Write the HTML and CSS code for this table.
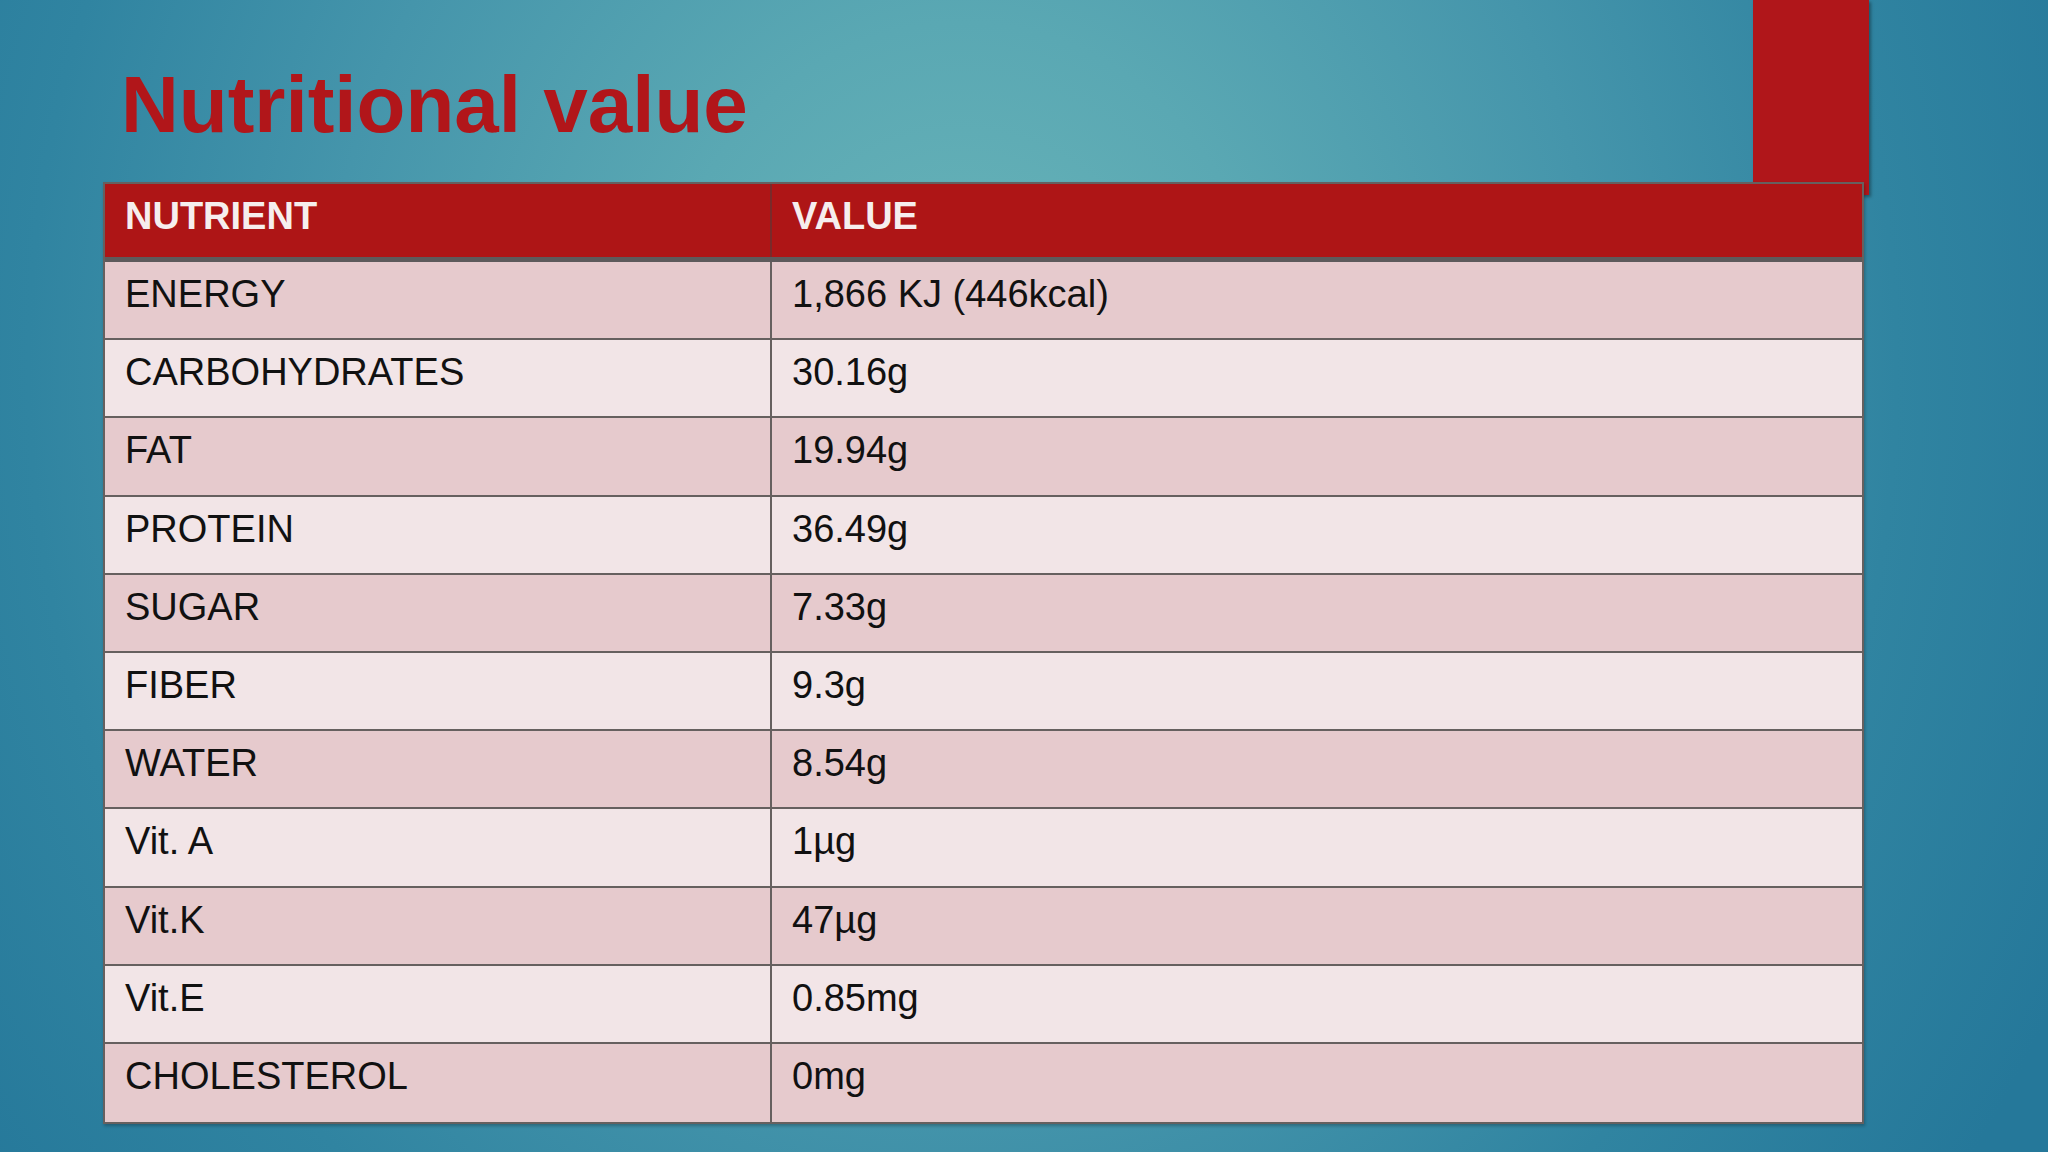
FILE: index.html
```html
<!DOCTYPE html>
<html lang="en">
<head>
<meta charset="utf-8">
<title>Nutritional value</title>
<link rel="stylesheet" href="styles.css">
</head>
<body>
<div class="slide">
  <div class="accent"></div>
  <h1 class="title">Nutritional value</h1>
  <div class="table">
    <div class="row head"><div class="cell">NUTRIENT</div><div class="cell">VALUE</div></div>
    <div class="row odd"><div class="cell">ENERGY</div><div class="cell">1,866 KJ (446kcal)</div></div>
    <div class="row even"><div class="cell">CARBOHYDRATES</div><div class="cell">30.16g</div></div>
    <div class="row odd"><div class="cell">FAT</div><div class="cell">19.94g</div></div>
    <div class="row even"><div class="cell">PROTEIN</div><div class="cell">36.49g</div></div>
    <div class="row odd"><div class="cell">SUGAR</div><div class="cell">7.33g</div></div>
    <div class="row even"><div class="cell">FIBER</div><div class="cell">9.3g</div></div>
    <div class="row odd"><div class="cell">WATER</div><div class="cell">8.54g</div></div>
    <div class="row even"><div class="cell">Vit. A</div><div class="cell">1µg</div></div>
    <div class="row odd"><div class="cell">Vit.K</div><div class="cell">47µg</div></div>
    <div class="row even"><div class="cell">Vit.E</div><div class="cell">0.85mg</div></div>
    <div class="row odd last"><div class="cell">CHOLESTEROL</div><div class="cell">0mg</div></div>
  </div>
</div>
</body>
</html>
```
FILE: styles.css
```css
html, body {
  margin: 0;
  padding: 0;
}
body {
  width: 2048px;
  height: 1152px;
  overflow: hidden;
  font-family: "Liberation Sans", Arial, sans-serif;
}
.slide {
  position: relative;
  width: 2048px;
  height: 1152px;
  box-sizing: border-box;
  padding: 65px 0 0 103px;
  display: flex;
  flex-direction: column;
  background:
    radial-gradient(ellipse 60% 120% at 47% 32%, #6ab5b9 0%, #5aa8b3 25%, #4595ab 52%, #3084a1 76%, #25789a 100%);
}
.accent {
  position: absolute;
  left: 1753px;
  top: 0;
  width: 116px;
  height: 195px;
  background: #b0161a;
  box-shadow: 2px 2px 3px rgba(0, 0, 0, 0.35);
  z-index: 0;
}
.title {
  margin: 0 0 37px 18px;
  font-size: 80px;
  line-height: 80px;
  font-weight: bold;
  color: #b1161a;
  position: relative;
  z-index: 1;
}
.table {
  position: relative;
  z-index: 1;
  width: 1761px;
  box-sizing: border-box;
  border: 2px solid #66605f;
  box-shadow: 1px 2px 3px rgba(0, 0, 0, 0.25);
  display: flex;
  flex-direction: column;
}
.row {
  display: grid;
  grid-template-columns: 667px 1fr;
  height: 78.2px;
  box-sizing: border-box;
  border-bottom: 2px solid #66605f;
}
.row.last {
  border-bottom: 0;
}
.row.head {
  height: 78px;
  border-bottom: 5px solid #5d5a5b;
  background: #ae1516;
  color: #f6eeee;
  font-weight: bold;
}
.row.odd {
  background: #e6cacd;
}
.row.even {
  background: #f2e5e7;
}
.cell {
  font-size: 38px;
  line-height: 1.15;
  padding: 11px 0 0 20px;
  color: inherit;
}
.row.odd .cell, .row.even .cell {
  color: #111;
}
.cell:first-child {
  border-right: 2px solid #66605f;
}
.row.head .cell:first-child {
  border-right-color: #7a2a2a;
}
```
